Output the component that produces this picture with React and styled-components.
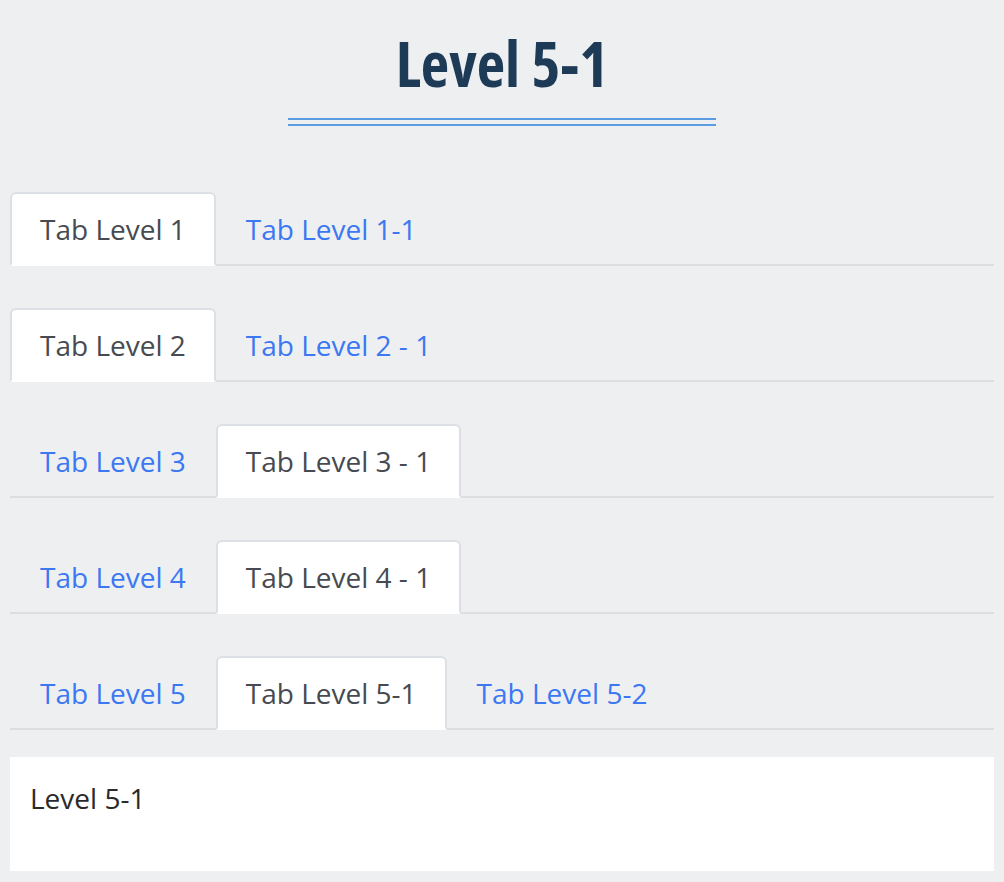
import React from "react";
import styled, { createGlobalStyle } from "styled-components";

const Global = createGlobalStyle`
  html, body { margin: 0; padding: 0; background: #eeeff1; }
  body { font-family: "Open Sans", "Liberation Sans", sans-serif; }
`;

const Page = styled.div`
  padding: 0 10px;
  display: flex;
  flex-direction: column;
`;

const Header = styled.header`
  display: flex;
  flex-direction: column;
  align-items: center;
  padding-top: 25px;
  margin-bottom: 66px;
`;

const Title = styled.h1`
  margin: 0;
  font-family: "Open Sans", "Liberation Sans Narrow", sans-serif;
  font-stretch: 75%;
  font-weight: 700;
  font-size: 62px;
  line-height: 77px;
  color: #1d3a57;
`;

const DoubleRule = styled.div`
  width: 428px;
  height: 4px;
  margin-top: 16px;
  border-top: 2px solid #5b9be0;
  border-bottom: 2px solid #5b9be0;
`;

const Nav = styled.nav`
  display: flex;
  border-bottom: 2px solid #dcdee2;
  margin-bottom: ${(p) => (p.$last ? "27px" : "42px")};
`;

const Tab = styled.a`
  display: block;
  font-size: 28px;
  line-height: 38px;
  padding: 16px 28px 16px 28px;
  margin-bottom: -2px;
  border: 2px solid ${(p) => (p.$active ? "#dcdfe3" : "transparent")};
  border-bottom-color: ${(p) => (p.$active ? "#ffffff" : "transparent")};
  border-radius: 6px 6px 0 0;
  background: ${(p) => (p.$active ? "#ffffff" : "transparent")};
  color: ${(p) => (p.$active ? "#474b51" : "#3b78f2")};
  text-decoration: none;
  white-space: nowrap;
  cursor: pointer;
`;

const Panel = styled.div`
  background: #ffffff;
  padding: 20px 20px;
  font-size: 28px;
  line-height: 42px;
  color: #2a2a2a;
`;

const PanelText = styled.p`
  margin: 0 0 32px;
`;

const rows = [
  { tabs: ["Tab Level 1", "Tab Level 1-1"], active: 0 },
  { tabs: ["Tab Level 2", "Tab Level 2 - 1"], active: 0 },
  { tabs: ["Tab Level 3", "Tab Level 3 - 1"], active: 1 },
  { tabs: ["Tab Level 4", "Tab Level 4 - 1"], active: 1 },
  { tabs: ["Tab Level 5", "Tab Level 5-1", "Tab Level 5-2"], active: 1 },
];

export default function App() {
  return (
    <>
      <Global />
      <Page>
        <Header>
          <Title>Level 5-1</Title>
          <DoubleRule />
        </Header>
        {rows.map((row, i) => (
          <Nav key={i} $last={i === rows.length - 1}>
            {row.tabs.map((t, j) => (
              <Tab key={t} $active={j === row.active}>
                {t}
              </Tab>
            ))}
          </Nav>
        ))}
        <Panel>
          <PanelText>Level 5-1</PanelText>
        </Panel>
      </Page>
    </>
  );
}
